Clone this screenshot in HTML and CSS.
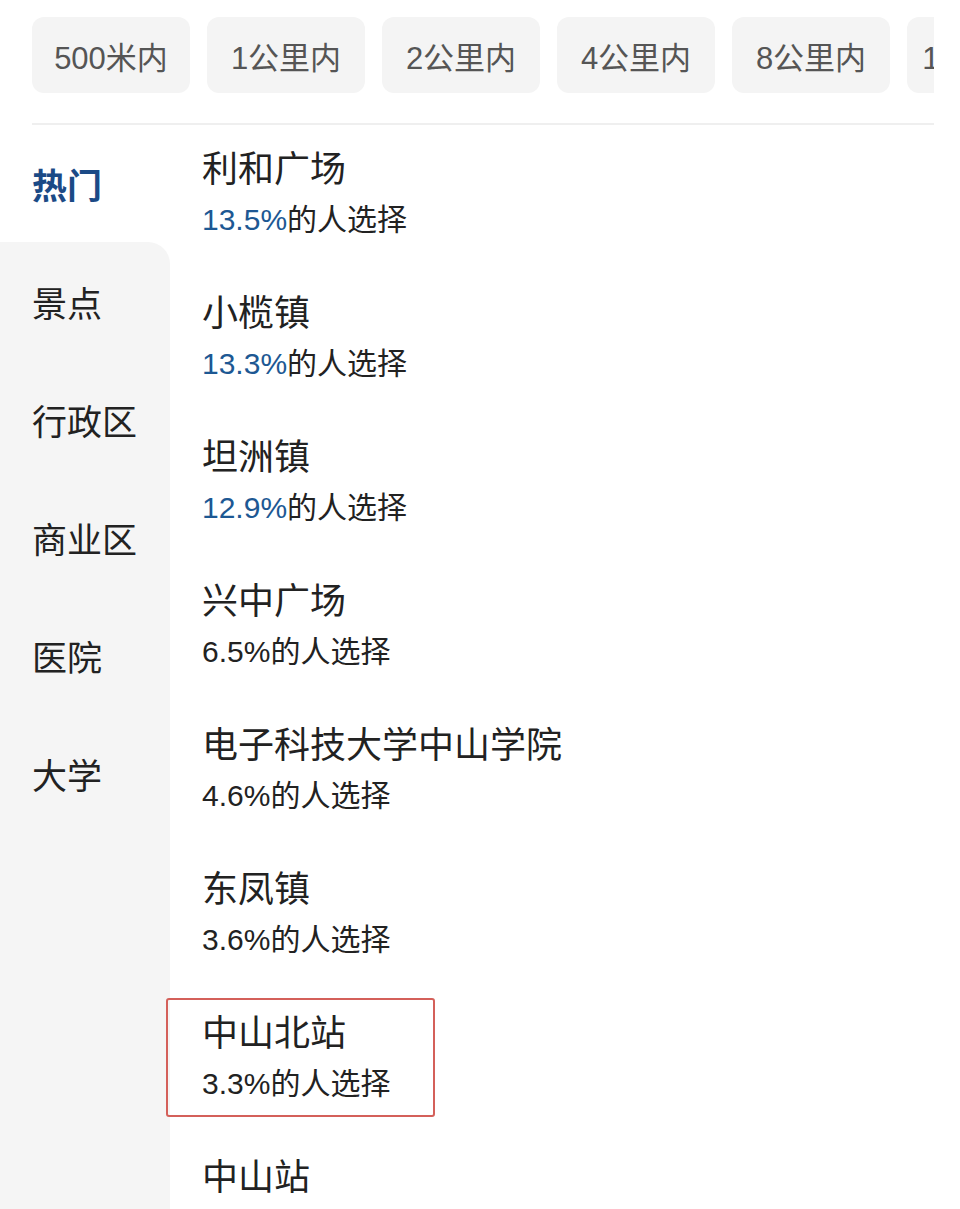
FILE: index.html
```html
<!DOCTYPE html>
<html lang="zh-CN">
<head>
  <meta charset="UTF-8"/>
  <meta name="viewport" content="width=device-width, initial-scale=1.0"/>
  <title>附近热门</title>
  <link rel="stylesheet" href="styles.css">
</head>
<body>
<header class="filters">
  <div class="chips">
    <button class="chip">500米内</button>
    <button class="chip">1公里内</button>
    <button class="chip">2公里内</button>
    <button class="chip">4公里内</button>
    <button class="chip">8公里内</button>
    <button class="chip">10公里内</button>
  </div>
</header>

<main class="board">
  <!-- category column -->
  <aside class="sidebar">
    <div class="side-item active">热门</div>
    <div class="side-rest">
      <div class="side-item">景点</div>
      <div class="side-item">行政区</div>
      <div class="side-item">商业区</div>
      <div class="side-item">医院</div>
      <div class="side-item">大学</div>
    </div>
  </aside>

  <!-- place list -->
  <ul class="places">
    <li class="place">
      <div class="name">利和广场</div>
      <div class="share"><span class="pct hot">13.5%</span>的人选择</div>
    </li>
    <li class="place">
      <div class="name">小榄镇</div>
      <div class="share"><span class="pct hot">13.3%</span>的人选择</div>
    </li>
    <li class="place">
      <div class="name">坦洲镇</div>
      <div class="share"><span class="pct hot">12.9%</span>的人选择</div>
    </li>
    <li class="place">
      <div class="name">兴中广场</div>
      <div class="share"><span class="pct">6.5%</span>的人选择</div>
    </li>
    <li class="place">
      <div class="name">电子科技大学中山学院</div>
      <div class="share"><span class="pct">4.6%</span>的人选择</div>
    </li>
    <li class="place">
      <div class="name">东凤镇</div>
      <div class="share"><span class="pct">3.6%</span>的人选择</div>
    </li>
    <li class="place marked">
      <div class="name">中山北站</div>
      <div class="share"><span class="pct">3.3%</span>的人选择</div>
    </li>
    <li class="place">
      <div class="name">中山站</div>
    </li>
  </ul>
</main>
</body>
</html>
```

FILE: styles.css
```css
body {
  font-family: 'Liberation Sans', 'Noto Sans CJK SC', sans-serif;
  margin: 0;
  background: #fff;
  color: #222;
  overflow: hidden;
}

.filters {
  padding: 17px 26px 0 32px;
}

.chips {
  display: flex;
  gap: 17px;
  overflow: hidden;
  padding-bottom: 30px;
  border-bottom: 2px solid #efefef;
}

.chip {
  flex: 0 0 158px;
  height: 76px;
  border: none;
  border-radius: 12px;
  background: #f4f4f4;
  color: #555;
  font-family: inherit;
  font-size: 31px;
  padding: 0;
  white-space: nowrap;
}

.board {
  display: flex;
}

.sidebar {
  width: 170px;
  flex-shrink: 0;
  display: flex;
  flex-direction: column;
}

.side-rest {
  flex: 1;
  background: #f5f5f5;
  border-top-right-radius: 22px;
}

.side-item {
  height: 118px;
  display: flex;
  align-items: center;
  padding-left: 32px;
  font-size: 35px;
  color: #222;
}

.side-item.active {
  height: 117px;
  color: #1b4a86;
  font-weight: bold;
}

.places {
  list-style: none;
  margin: 0;
  padding: 0 0 0 32px;
  flex: 1;
}

.place {
  position: relative;
  padding: 21px 0 23px;
}

.name {
  font-size: 36px;
  line-height: 48px;
}

.share {
  font-size: 30px;
  line-height: 52px;
}

.pct.hot {
  color: #1d5893;
}

/* red annotation frame around one row */
.marked::after {
  content: '';
  position: absolute;
  left: -36px;
  top: 9px;
  width: 265px;
  height: 115px;
  border: 2px solid #d4605a;
  border-radius: 3px;
}
```
